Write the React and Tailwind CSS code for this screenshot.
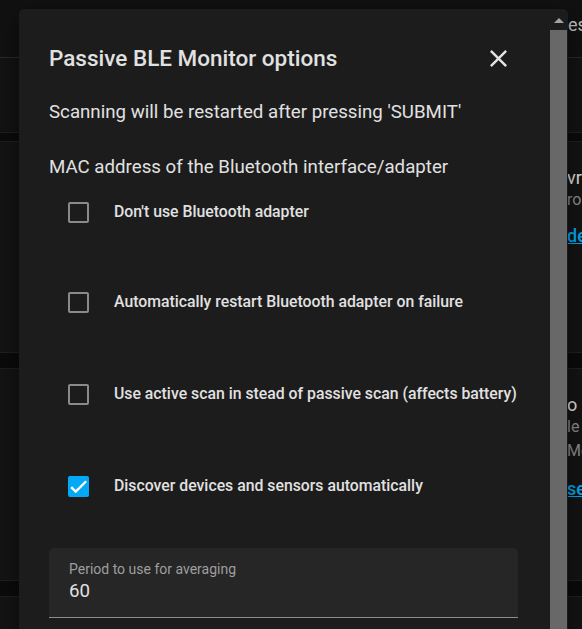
function Checkbox({ checked }) {
  if (checked) {
    return (
      <div className="w-[21px] h-[21px] rounded-[2px] bg-[#03a9f4] flex items-center justify-center">
        <svg viewBox="0 0 24 24" className="w-[17px] h-[17px]">
          <path d="M1.73 12.91 8.1 19.28 22.79 4.59" fill="none" stroke="#fff" strokeWidth="3.4" />
        </svg>
      </div>
    );
  }
  return <div className="w-[21px] h-[21px] rounded-[2px] border-[2px] border-[#8a8a8a]" />;
}

function Option({ label, checked, className }) {
  return (
    <div className={`flex items-center h-[42px] ${className}`}>
      <div className="w-[21px] ml-[19px] flex items-center">
        <Checkbox checked={checked} />
      </div>
      <span className="ml-[25px] text-[15.8px] leading-[24px] font-medium text-[#e1e1e1] whitespace-nowrap">{label}</span>
    </div>
  );
}

function PageCard({ title, lines, link, linkGap, className }) {
  return (
    <div className={`bg-[#141414] pl-[567px] pt-[26px] whitespace-nowrap ${className}`}>
      <div className="text-[18px] leading-[20px] text-[#e1e1e1]">{title}</div>
      {lines.map((l) => (
        <div key={l} className="text-[16px] leading-[24px] text-[#8f8f8f]">{l}</div>
      ))}
      <div className={`text-[18px] leading-[24px] font-medium text-[#03a9f4] underline ${linkGap}`}>{link}</div>
    </div>
  );
}

export default function App() {
  return (
    <div className="relative w-[582px] h-[629px] overflow-hidden bg-[#111111] font-['Roboto',sans-serif]">
      {/* page behind the dialog */}
      <div className="flex flex-col">
        <div className="h-[58px] border-b border-[#2b2b2b] pl-[568px] pt-[14px] text-[18px] leading-[22px] text-[#c4c4c4] whitespace-nowrap">es</div>
        <div className="h-[74px] bg-[#131313]" />
        <div className="h-[10px] bg-[#0b0b0b] border-y border-[#202020]" />
        <PageCard title="vr" lines={['ro']} link="de" linkGap="mt-[12px]" className="h-[210px]" />
        <div className="h-[17px] bg-[#0b0b0b] border-y border-[#202020]" />
        <PageCard title="o" lines={['le', 'Me']} link="se" linkGap="mt-[14px]" className="h-[211px]" />
        <div className="h-[17px] bg-[#0b0b0b] border-y border-[#202020]" />
        <div className="h-[40px] bg-[#141414]" />
      </div>

      {/* dialog */}
      <div className="absolute left-[19px] top-[9px] w-[549px] h-[640px] rounded-[5px] overflow-hidden bg-[#1c1c1c] flex shadow-[0_8px_24px_rgba(0,0,0,0.5)]">
        <div className="flex-1 pl-[30px] pr-[31px] pt-[35px]">
          <div className="flex justify-between items-start">
            <h2 className="text-[22.5px] leading-[28px] font-medium text-[#e1e1e1]">Passive BLE Monitor options</h2>
            <div className="w-[40px] flex justify-center">
              <svg viewBox="5 5 14 14" className="w-[17px] h-[17px] mt-[6px]">
                <path
                  d="M19,6.41L17.59,5L12,10.59L6.41,5L5,6.41L10.59,12L5,17.59L6.41,19L12,13.41L17.59,19L19,17.59L13.41,12L19,6.41Z"
                  fill="#e1e1e1"
                />
              </svg>
            </div>
          </div>
          <p className="mt-[27px] text-[18.7px] leading-[26px] text-[#e1e1e1]">Scanning will be restarted after pressing 'SUBMIT'</p>
          <p className="mt-[29px] text-[18.7px] leading-[26px] text-[#e1e1e1]">MAC address of the Bluetooth interface/adapter</p>

          <Option className="mt-[11px]" label="Don't use Bluetooth adapter" />
          <Option className="mt-[48px]" label="Automatically restart Bluetooth adapter on failure" />
          <Option className="mt-[50px]" label="Use active scan in stead of passive scan (affects battery)" />
          <Option className="mt-[50px]" label="Discover devices and sensors automatically" checked />

          <div className="mt-[41px] bg-[#262626] rounded-t-[5px] border-b border-[#8c8c8c] px-[20px] pt-[12px] pb-[13px]">
            <div className="text-[14px] leading-[18px] text-[#9e9e9e]">Period to use for averaging</div>
            <div className="text-[18.7px] leading-[26px] text-[#e1e1e1]">60</div>
          </div>
        </div>

        {/* scrollbar */}
        <div className="w-[19px] flex flex-col">
          <div className="h-[21px] flex items-center justify-center">
            <div className="w-0 h-0 border-x-[5px] border-x-transparent border-b-[5px] border-b-[#a3a3a3] mt-[2px]" />
          </div>
          <div className="flex-1 ml-[1px] mr-[1px] bg-[#686868]" />
        </div>
      </div>
    </div>
  );
}
